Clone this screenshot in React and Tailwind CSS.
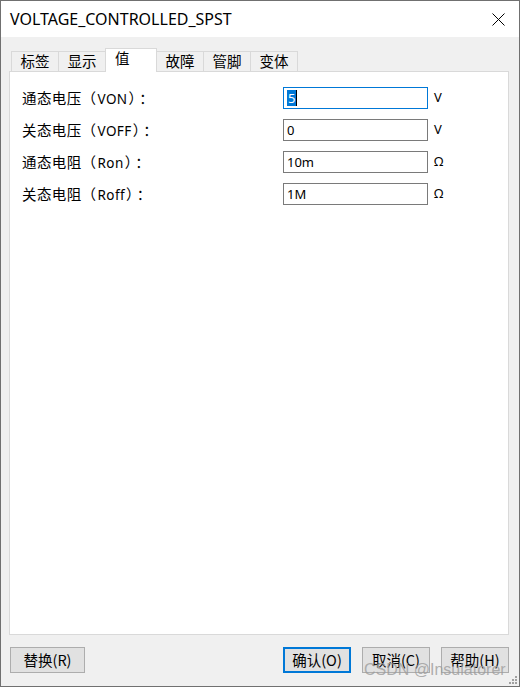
import React from 'react';

const cjk = { fontFamily: '"Noto Sans CJK SC", "Noto Sans", sans-serif' };

const tabs = [
  { label: '标签', w: 'w-[48px]' },
  { label: '显示', w: 'w-[48px]' },
  { label: '值', w: 'w-[52px]', active: true },
  { label: '故障', w: 'w-[48px]' },
  { label: '管脚', w: 'w-[48px]' },
  { label: '变体', w: 'w-[48px]' },
];

const rows = [
  { name: '通态电压', sym: 'VON', value: '5', unit: 'V', focused: true },
  { name: '关态电压', sym: 'VOFF', value: '0', unit: 'V' },
  { name: '通态电阻', sym: 'Ron', value: '10m', unit: 'Ω' },
  { name: '关态电阻', sym: 'Roff', value: '1M', unit: 'Ω' },
];

function Button({ children, wide, focused }) {
  return (
    <button
      className={
        'h-[26px] bg-[#e1e1e1] text-[14.5px] text-black flex items-center justify-center ' +
        (wide ? 'w-[75px] ' : 'w-[68px] ') +
        (focused ? 'border-2 border-[#0078d7]' : 'border border-[#adadad]')
      }
      style={cjk}
    >
      {children}
    </button>
  );
}

const App = () => {
  return (
    <div
      className="relative w-[520px] h-[687px] border border-[#707070] bg-[#f0f0f0] flex flex-col overflow-hidden"
      style={cjk}
    >
      {/* title bar */}
      <div className="h-[36px] bg-white flex items-center justify-between pl-[9px] pr-[14px]">
        <span className="text-[16px] text-black" style={{ fontFamily: '"Noto Sans", sans-serif' }}>
          VOLTAGE_CONTROLLED_SPST
        </span>
        <svg width="13" height="13" viewBox="0 0 13 13" className="mt-[1px]">
          <path d="M0.5 0.5 L12.5 12.5 M12.5 0.5 L0.5 12.5" stroke="#000" strokeWidth="1" />
        </svg>
      </div>

      <div className="flex-1 flex flex-col pl-[8px] pr-[10px] pt-[11px]">
        {/* tabs */}
        <div className="flex items-end h-[23px] pl-[2px] relative z-10">
          {tabs.map((t, i) => (
            <div
              key={t.label}
              className={
                t.w +
                ' flex border-t border-l border-r border-[#d9d9d9] text-[14.5px] text-black ' +
                (i > 0 ? '-ml-px ' : '') +
                (t.active
                  ? 'h-[24px] -mb-px bg-white pl-[9px] relative z-10'
                  : 'h-[20px] bg-[#f0f0f0] justify-center')
              }
            >
              <span className={t.active ? 'leading-[17px]' : 'leading-[17px]'}>{t.label}</span>
            </div>
          ))}
        </div>

        {/* panel */}
        <div className="h-[564px] border border-[#d9d9d9] bg-white pt-[15px] pl-[12px]">
          <div className="flex flex-col gap-[10px]">
            {rows.map((r) => (
              <div key={r.name} className="flex items-center h-[22px]">
                <div className="w-[261px] text-[14.5px] text-black whitespace-nowrap tracking-[0.4px]">
                  {r.name}（<span className="text-[13.5px] px-[1px]" style={{ fontFamily: '"Noto Sans", sans-serif' }}>{r.sym}</span>）<span className="ml-[3px]">：</span>
                </div>
                <div
                  className={
                    'w-[145px] h-[22px] flex items-center pl-[3px] text-[13px] text-black ' +
                    (r.focused ? 'border border-[#0078d7]' : 'border border-[#7a7a7a]')
                  }
                  style={{ fontFamily: '"Noto Sans", sans-serif' }}
                >
                  {r.focused ? (
                    <>
                      <span className="bg-[#0078d7] text-white leading-[16px] px-px">{r.value}</span>
                      <span className="w-px h-[16px] bg-[#000]" />
                    </>
                  ) : (
                    <span className="leading-[16px]">{r.value}</span>
                  )}
                </div>
                <span
                  className="ml-[6px] text-[13px] text-black"
                  style={{ fontFamily: '"Noto Sans", sans-serif' }}
                >
                  {r.unit}
                </span>
              </div>
            ))}
          </div>
        </div>

        {/* buttons */}
        <div className="flex items-center mt-[12px] pl-[1px]">
          <Button wide>替换(R)</Button>
          <div className="flex-1" />
          <div className="flex gap-[11px]">
            <Button focused>确认(O)</Button>
            <Button>取消(C)</Button>
            <Button>帮助(H)</Button>
          </div>
        </div>
      </div>

      {/* watermark */}
      <div
        className="absolute left-[363px] top-[657px] text-[16px] text-[#9c9c9c]/80 whitespace-nowrap pointer-events-none"
        style={{ fontFamily: '"Liberation Sans", sans-serif' }}
      >
        CSDN @Insulatorer
      </div>

      {/* resize grip */}
      <svg width="10" height="10" viewBox="0 0 10 10" className="absolute right-[1px] bottom-[1px]">
        <rect x="7" y="1" width="2" height="2" fill="#a0a0a0" />
        <rect x="4" y="4" width="2" height="2" fill="#a0a0a0" />
        <rect x="7" y="4" width="2" height="2" fill="#a0a0a0" />
        <rect x="1" y="7" width="2" height="2" fill="#a0a0a0" />
        <rect x="4" y="7" width="2" height="2" fill="#a0a0a0" />
        <rect x="7" y="7" width="2" height="2" fill="#a0a0a0" />
      </svg>
    </div>
  );
};

export default App;
